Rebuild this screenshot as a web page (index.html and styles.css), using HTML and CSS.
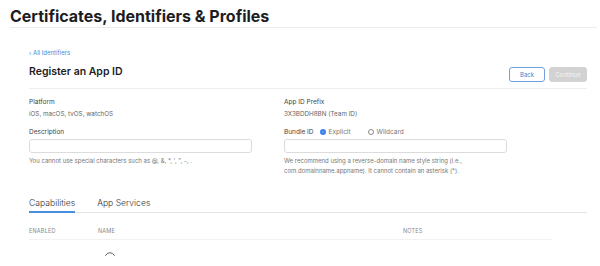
FILE: index.html
```html
<!DOCTYPE html>
<html lang="en">
<head>
  <meta charset="UTF-8" />
  <title>Register an App ID</title>
  <link rel="stylesheet" href="styles.css">
</head>
<body>
  <header class="top">
    <h1>Certificates, Identifiers &amp; Profiles</h1>
  </header>

  <main class="page">
    <a class="back-link" href="#">&lsaquo; All Identifiers</a>
    <div class="title-row">
      <h2>Register an App ID</h2>
      <div class="actions">
        <button class="btn btn-back">Back</button>
        <button class="btn btn-continue" disabled>Continue</button>
      </div>
    </div>

    <div class="fields">
      <div class="field">
        <div class="label">Platform</div>
        <div class="value">iOS, macOS, tvOS, watchOS</div>
      </div>
      <div class="field">
        <div class="label">App ID Prefix</div>
        <div class="value">3X3BDDH8BN (Team ID)</div>
      </div>

      <div class="field">
        <label class="label" for="desc">Description</label>
        <input class="text-input" id="desc" type="text">
        <p class="help">You cannot use special characters such as @, &amp;, *, ', ", -, .</p>
      </div>
      <div class="field">
        <div class="label bundle">
          Bundle ID
          <span class="radio checked"></span><span class="radio-text">Explicit</span>
          <span class="radio"></span><span class="radio-text">Wildcard</span>
        </div>
        <input class="text-input" type="text">
        <p class="help">We recommend using a reverse-domain name style string (i.e., com.domainname.appname). It cannot contain an asterisk (*).</p>
      </div>
    </div>

    <nav class="tabs">
      <span class="tab active">Capabilities</span>
      <span class="tab">App Services</span>
    </nav>

    <div class="table-head">
      <span class="col-enabled">Enabled</span>
      <span class="col-name">Name</span>
      <span class="col-notes">Notes</span>
    </div>

    <div class="loading">
      <svg width="14" height="14" viewBox="0 0 14 14">
        <path d="M2.5 5.5 A5 5 0 0 1 11.5 5.5" fill="none" stroke="#666" stroke-width="1" stroke-linecap="round"/>
      </svg>
    </div>
  </main>
</body>
</html>
```

FILE: styles.css
```css
html, body {
  margin: 0;
}
body {
  font-family: Inter, "Open Sans", "Liberation Sans", sans-serif;
  background: #fff;
  color: #333;
}
.top {
  margin: 0 3px 0 10px;
  height: 27px;
  border-bottom: 1px solid #ececec;
}
.top h1 {
  margin: 0;
  padding-top: 8px;
  font-size: 16px;
  line-height: 16px;
  font-weight: 700;
  color: #1d1d1f;
}
.page {
  margin-left: 29px;
  width: 558px;
}
.back-link {
  display: block;
  margin-top: 20px;
  font-size: 6px;
  line-height: 10px;
  color: #4a8ad8;
  text-decoration: none;
}
.title-row {
  display: flex;
  justify-content: space-between;
  align-items: flex-start;
  margin-top: 7px;
  padding-bottom: 6px;
  border-bottom: 1px solid #eeeeee;
}
.title-row h2 {
  margin: 0;
  font-size: 10.5px;
  line-height: 14px;
  font-weight: 600;
  color: #1d1d1f;
}
.actions {
  display: flex;
  gap: 4px;
  margin-top: 2px;
}
.btn {
  height: 15px;
  padding: 0;
  border-radius: 3px;
  font-family: inherit;
  font-size: 6px;
  line-height: 13px;
}
.btn-back {
  width: 36px;
  background: #fff;
  color: #3f7fd0;
  border: 1px solid #6f9fe0;
}
.btn-continue {
  width: 38px;
  background: #d2d2d2;
  color: #f4f4f4;
  border: 1px solid #d2d2d2;
}
.fields {
  display: grid;
  grid-template-columns: 255px 255px;
  row-gap: 8px;
  margin-top: 8px;
}
.field {
  display: flex;
  flex-direction: column;
  gap: 2px;
}
.label {
  font-size: 6.5px;
  line-height: 10px;
  color: #444;
}
.value {
  font-size: 6.3px;
  line-height: 10px;
  color: #666;
}
.bundle {
  display: flex;
  align-items: center;
}
.radio {
  width: 6px;
  height: 6px;
  margin: 0 3px 0 6px;
  border: 1px solid #8a8a8a;
  border-radius: 50%;
  box-sizing: border-box;
}
.radio.checked {
  border: 2px solid #3a82f0;
  background: #fff;
  box-shadow: inset 0 0 0 1px #3a82f0;
}
.radio.checked + .radio-text {
  margin-right: 11px;
}
.radio-text {
  color: #777;
}
.text-input {
  width: 223px;
  height: 14px;
  margin: 0;
  padding: 0 4px;
  border: 1px solid #dcdcdc;
  border-radius: 3px;
  box-sizing: border-box;
  background: #fff;
}
.help {
  margin: 1px 0 0;
  width: 230px;
  font-size: 6px;
  line-height: 9.5px;
  color: #777;
}
.tabs {
  display: flex;
  gap: 22px;
  margin-top: 22px;
  border-bottom: 1px solid #e3e3e3;
}
.tab {
  font-size: 8.6px;
  line-height: 12px;
  padding-bottom: 2px;
  color: #333;
  font-weight: 300;
  border-bottom: 2px solid transparent;
  margin-bottom: -1px;
}
.tab.active {
  border-bottom-color: #4a8ee0;
}
.table-head {
  display: flex;
  width: 523px;
  margin-top: 13px;
  padding-bottom: 3px;
  border-bottom: 1px solid #f2f2f2;
  font-size: 5.5px;
  line-height: 10px;
  text-transform: uppercase;
  color: #888;
  letter-spacing: 0.2px;
}
.col-enabled {
  width: 69px;
}
.col-name {
  width: 305px;
}
.loading {
  padding: 10px 0 0 74px;
}
.loading svg {
  display: block;
}
```
